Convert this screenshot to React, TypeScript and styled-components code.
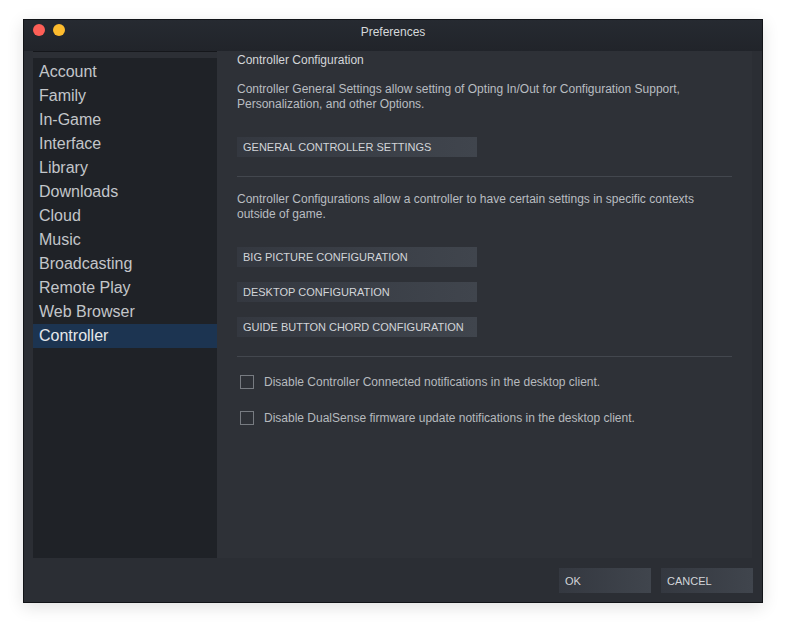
import React from "react";
import styled, { createGlobalStyle } from "styled-components";

const GlobalStyle = createGlobalStyle`
	html, body {
		margin: 0;
		padding: 0;
		background: #ffffff;
	}
	body {
		font-family: "Liberation Sans", Arial, sans-serif;
	}
`;

const Page = styled.div`
	padding: 19px 23px;
	width: 786px;
	height: 631px;
	box-sizing: border-box;
`;

const Window = styled.div`
	width: 740px;
	height: 584px;
	display: flex;
	flex-direction: column;
	background: #2b2e34;
	border: 1px solid #121418;
	box-sizing: border-box;
	box-shadow: 0 4px 16px rgba(0, 0, 0, 0.12);
`;

const TitleBar = styled.div`
	height: 31px;
	box-sizing: border-box;
	padding-top: 5px;
	position: relative;
	display: flex;
	justify-content: center;
	background: linear-gradient(180deg, #262a31 0%, #21242a 100%);
	color: #d6d8da;
	font-size: 12px;
	line-height: 14px;
`;

const Lights = styled.div`
	position: absolute;
	left: 9px;
	top: 4px;
	display: flex;
	gap: 8px;
`;

const Light = styled.span<{ $color: string }>`
	width: 12px;
	height: 12px;
	border-radius: 50%;
	background: ${({ $color }) => $color};
`;

const Body = styled.div`
	display: flex;
	height: 507px;
	padding: 0 10px 0 9px;
`;

const Sidebar = styled.ul`
	list-style: none;
	margin: 0;
	width: 184px;
	padding: 8px 0 0;
	box-sizing: border-box;
	border-top: 1px solid #15171b;
	background: linear-gradient(180deg, #2c2f35 0 6px, #1f2227 6px);
`;

const NavItem = styled.li<{ $active?: boolean }>`
	height: 24px;
	line-height: 24px;
	padding-left: 6px;
	font-size: 16px;
	color: ${({ $active }) => ($active ? "#e6e8ea" : "#c3c6ca")};
	background: ${({ $active }) => ($active ? "#1c3451" : "transparent")};
`;

const Content = styled.div`
	flex: 1;
	background: #2e3137;
	padding: 2px 20px 0 20px;
	color: #b9bdc1;
	font-size: 12px;
`;

const Heading = styled.div`
	line-height: 14px;
	color: #d4d6d9;
`;

const Paragraph = styled.p<{ $top: number }>`
	margin: ${({ $top }) => $top}px 0 0;
	line-height: 14.5px;
	max-width: 470px;
`;

const ButtonStack = styled.div<{ $top: number }>`
	display: flex;
	flex-direction: column;
	gap: 15px;
	margin-top: ${({ $top }) => $top}px;
`;

const SteamButton = styled.button<{ $width?: number }>`
	width: ${({ $width }) => $width ?? 240}px;
	height: 20px;
	padding: 0 0 0 6px;
	border: none;
	text-align: left;
	font-family: "Liberation Sans", Arial, sans-serif;
	font-size: 11px;
	text-transform: uppercase;
	color: #d2d5d9;
	background: linear-gradient(90deg, #343840 0%, #40454d 100%);
`;

const Divider = styled.hr<{ $top: number }>`
	border: none;
	border-top: 1px solid #43474e;
	margin: ${({ $top }) => $top}px 0 0;
	width: 495px;
`;

const CheckRow = styled.label<{ $top: number }>`
	display: flex;
	align-items: center;
	gap: 10px;
	margin-top: ${({ $top }) => $top}px;
	padding-left: 3px;
	height: 14px;
	color: #b6babe;
`;

const CheckBox = styled.span`
	width: 14px;
	height: 14px;
	box-sizing: border-box;
	border: 1px solid #777b81;
`;

const Footer = styled.div`
	flex: 1;
	display: flex;
	justify-content: flex-end;
	align-items: flex-start;
	gap: 10px;
	padding: 10px 9px 0 0;
`;

const FooterButton = styled(SteamButton)`
	width: 92px;
	height: 25px;
`;

const navItems = [
	"Account",
	"Family",
	"In-Game",
	"Interface",
	"Library",
	"Downloads",
	"Cloud",
	"Music",
	"Broadcasting",
	"Remote Play",
	"Web Browser",
	"Controller",
];

const App: React.FC = () => {
	return (
		<Page>
			<GlobalStyle />
			<Window>
				<TitleBar>
					<Lights>
						<Light $color="#fe5f57" />
						<Light $color="#febc2e" />
					</Lights>
					Preferences
				</TitleBar>
				<Body>
					<Sidebar>
						{navItems.map((item) => (
							<NavItem key={item} $active={item === "Controller"}>
								{item}
							</NavItem>
						))}
					</Sidebar>
					<Content>
						<Heading>Controller Configuration</Heading>
						<Paragraph $top={15}>
							Controller General Settings allow setting of Opting In/Out for
							Configuration Support, Personalization, and other Options.
						</Paragraph>
						<ButtonStack $top={26}>
							<SteamButton>General Controller Settings</SteamButton>
						</ButtonStack>
						<Divider $top={19} />
						<Paragraph $top={15}>
							Controller Configurations allow a controller to have certain
							settings in specific contexts outside of game.
						</Paragraph>
						<ButtonStack $top={26}>
							<SteamButton>Big Picture Configuration</SteamButton>
							<SteamButton>Desktop Configuration</SteamButton>
							<SteamButton>Guide Button Chord Configuration</SteamButton>
						</ButtonStack>
						<Divider $top={19} />
						<CheckRow $top={18}>
							<CheckBox />
							Disable Controller Connected notifications in the desktop client.
						</CheckRow>
						<CheckRow $top={22}>
							<CheckBox />
							Disable DualSense firmware update notifications in the desktop
							client.
						</CheckRow>
					</Content>
				</Body>
				<Footer>
					<FooterButton>OK</FooterButton>
					<FooterButton>Cancel</FooterButton>
				</Footer>
			</Window>
		</Page>
	);
};

export default App;
